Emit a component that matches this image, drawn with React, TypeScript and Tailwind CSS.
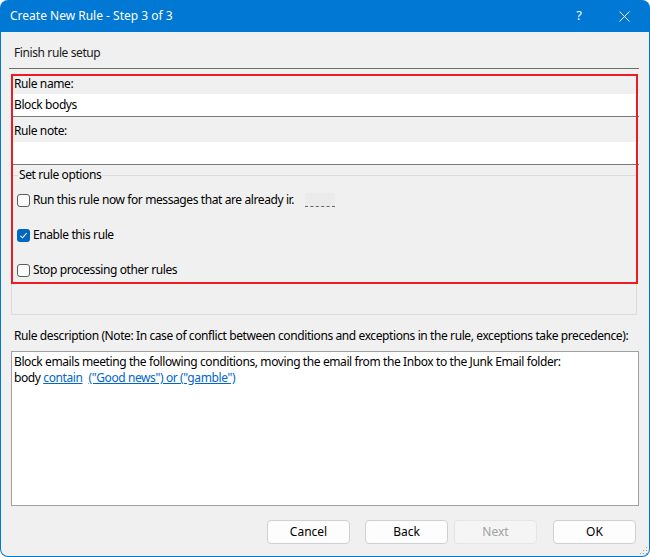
import React from 'react'

function Checkbox({ checked }: { checked?: boolean }) {
  if (checked) {
    return (
      <span className="flex h-[13px] w-[13px] items-center justify-center rounded-[3px] bg-[#0067c0]">
        <svg width="9" height="9" viewBox="0 0 9 9" fill="none">
          <path d="M1.5 4.8 L3.6 6.8 L7.6 2.2" stroke="white" strokeWidth="1.1" />
        </svg>
      </span>
    )
  }
  return <span className="h-[13px] w-[13px] rounded-[3px] border border-[#5c5c5c] bg-[#fbfbfb]" />
}

function Button({ label, disabled }: { label: string; disabled?: boolean }) {
  return (
    <button
      className={
        disabled
          ? 'h-[24px] w-[83px] rounded-[4px] border border-[#e5e5e5] bg-[#f5f5f5] text-[#a0a0a0]'
          : 'h-[24px] w-[83px] rounded-[4px] border border-[#d0d0d0] bg-[#fdfdfd] text-black'
      }
    >
      {label}
    </button>
  )
}

export default function App() {
  const options = [
    { label: 'Run this rule now for messages that are already ir.', checked: false, smudge: true },
    { label: 'Enable this rule', checked: true },
    { label: 'Stop processing other rules', checked: false },
  ]

  return (
    <div className="relative h-[557px] w-[650px] bg-white font-['Noto_Sans',sans-serif] text-[12px] text-black">
      {/* Title bar */}
      <div className="flex h-[32px] items-center rounded-t-[8px] bg-[#0078d4] pl-[10px] text-white">
        <span className="flex-1">Create New Rule - Step 3 of 3</span>
        <span className="mr-[37px] text-[13px]">?</span>
        <svg className="mr-[20px]" width="11" height="11" viewBox="0 0 11 11">
          <path d="M0.5 0.5 L10.5 10.5 M10.5 0.5 L0.5 10.5" stroke="white" strokeWidth="1" />
        </svg>
      </div>

      {/* Body */}
      <div className="relative flex h-[525px] flex-col rounded-b-[8px] border-x border-b border-[#0078d4] bg-[#f0f0f0] px-[10px] tracking-[-0.4px]">
        <div className="pl-[3px] pt-[13px] leading-[16px] text-[#1a1a1a]">Finish rule setup</div>
        <div className="ml-[-2px] mt-[7px] h-px bg-[#6e6e6e]" />

        <div className="mt-[7px] h-[18px] pl-[3px] leading-[16px]">Rule name:</div>
        <div className="h-[23px] border-b border-[#7a7a7a] bg-white pl-[3px] leading-[22px]">Block bodys</div>
        <div className="h-[25px] pl-[3px] pt-[6px] leading-[16px]">Rule note:</div>
        <div className="h-[23px] border-b border-[#7a7a7a] bg-white" />

        <fieldset className="mr-[2px] mt-[2px] border border-[#dcdcdc] pb-[35px] pl-[5px] pt-[8px]">
          <legend className="ml-[1px] px-[1px] leading-[16px]">Set rule options</legend>
          <div className="flex flex-col gap-[17px]">
            {options.map((o) => (
              <div key={o.label} className="flex h-[18px] items-center gap-[3px]">
                <Checkbox checked={o.checked} />
                <span>{o.label}</span>
                {o.smudge && (
                  <span className="ml-[8px] h-[14px] w-[30px] border-b border-dashed border-[#666] bg-[#ebebeb]" />
                )}
              </div>
            ))}
          </div>
        </fieldset>

        <div className="mt-[13px] whitespace-nowrap pl-[3px] leading-[16px]">
          Rule description (Note: In case of conflict between conditions and exceptions in the rule, exceptions take precedence):
        </div>
        <div className="mt-[7px] h-[155px] border border-[#a0a0a0] bg-white px-[2px] pt-[2px] leading-[16px]">
          <div>Block emails meeting the following conditions, moving the email from the Inbox to the Junk Email folder:</div>
          <div>
            body <a className="text-[#0066cc] underline">contain</a>
            <a className="ml-[6px] text-[#0066cc] underline">("Good news") or ("gamble")</a>
          </div>
        </div>

        <div className="mt-[14px] flex justify-end pr-[3px] tracking-normal">
          <Button label="Cancel" />
          <div className="ml-[15px]">
            <Button label="Back" />
          </div>
          <div className="ml-[6px]">
            <Button label="Next" disabled />
          </div>
          <div className="ml-[16px]">
            <Button label="OK" />
          </div>
        </div>

        {/* resize grip */}
        <svg className="absolute bottom-[1px] right-[1px]" width="8" height="8" viewBox="0 0 8 8">
          <rect x="6" y="0" width="1" height="1" fill="#9a9a9a" />
          <rect x="3" y="3" width="1" height="1" fill="#9a9a9a" />
          <rect x="6" y="3" width="1" height="1" fill="#9a9a9a" />
          <rect x="0" y="6" width="1" height="1" fill="#9a9a9a" />
          <rect x="3" y="6" width="1" height="1" fill="#9a9a9a" />
          <rect x="6" y="6" width="1" height="1" fill="#9a9a9a" />
        </svg>
      </div>

      {/* Red annotation box */}
      <div className="pointer-events-none absolute left-[11px] top-[74px] h-[210px] w-[627px] border-2 border-[#ed1c24]" />
    </div>
  )
}
